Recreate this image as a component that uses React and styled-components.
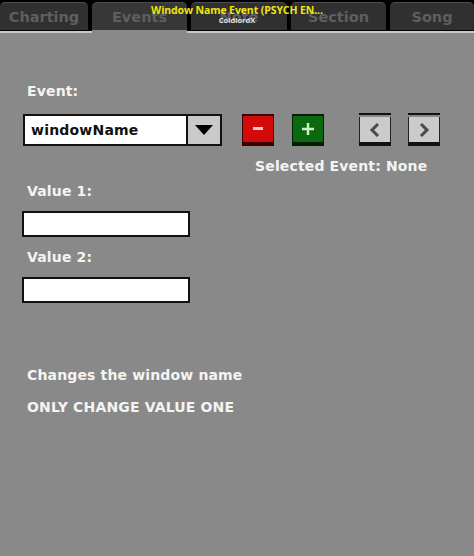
import React from "react";
import styled, { createGlobalStyle } from "styled-components";

const GlobalStyle = createGlobalStyle`
  html, body {
    margin: 0;
    padding: 0;
    background: #898989;
  }
  body {
    font-family: "DejaVu Sans", "Liberation Sans", sans-serif;
  }
`;

const Page = styled("div")`
  width: 474px;
  height: 556px;
  background: #898989;
  overflow: hidden;
  position: relative;
`;

const TabBar = styled("div")`
  display: flex;
  gap: 4px;
  height: 28px;
  padding-top: 2px;
  padding-bottom: 1px;
  background: #000;
  border-bottom: 2px solid #c9c9c9;
`;

const Tab = styled("div")`
  width: ${p => p.w}px;
  flex: none;
  height: ${p => (p.active ? 31 : 28)}px;
  margin-bottom: ${p => (p.active ? -3 : 0)}px;
  box-sizing: border-box;
  border-radius: 5px 5px 0 0;
  border-top: 1px solid #4c4c4c;
  background: ${p => (p.active ? "linear-gradient(#373737 27px, #898989 27px)" : "#303030")};
  color: #5f5f5f;
  font-weight: bold;
  font-size: 14.5px;
  line-height: 29px;
  text-align: center;
  position: relative;
  z-index: ${p => (p.active ? 1 : 0)};
`;

const TitleOverlay = styled("div")`
  position: absolute;
  top: 4px;
  left: 0;
  right: 0;
  text-align: center;
  z-index: 2;
  font-family: "Open Sans", "DejaVu Sans", sans-serif;
`;

const TitleText = styled("div")`
  color: #f2e40c;
  font-size: 10.5px;
  font-weight: bold;
  line-height: 12px;
  letter-spacing: -0.1px;
`;

const Author = styled("div")`
  color: #e0e0e0;
  font-size: 7.5px;
  font-weight: bold;
  line-height: 9px;
`;

const Content = styled("div")`
  padding: 0 0 0 22px;
  display: flex;
  flex-direction: column;
  align-items: flex-start;
`;

const Label = styled("div")`
  color: #f4f4f4;
  font-weight: bold;
  font-size: 14px;
  line-height: 16px;
  letter-spacing: 0.15px;
  margin-top: ${p => p.mt || 0}px;
  margin-left: ${p => (p.ml == null ? 5 : p.ml)}px;
`;

const EventRow = styled("div")`
  display: flex;
  align-items: flex-start;
  margin-top: 15px;
  margin-left: 1px;
`;

const Dropdown = styled("div")`
  display: flex;
  width: 199px;
  height: 32px;
  box-sizing: border-box;
  border: 2px solid #111;
  background: #fff;
`;

const DropdownText = styled("div")`
  flex: 1;
  color: #111;
  font-weight: bold;
  font-size: 14px;
  line-height: 29px;
  padding-left: 6px;
  letter-spacing: 0.2px;
`;

const DropdownArrow = styled("div")`
  width: 32px;
  border-left: 2px solid #111;
  background: #c9c9c9;
  display: flex;
  align-items: center;
  justify-content: center;
`;

const ColorButton = styled("div")`
  width: 32px;
  height: 32px;
  box-sizing: border-box;
  margin-left: ${p => p.ml}px;
  background: ${p => p.bg};
  border-top: 2px solid ${p => p.edge};
  border-bottom: 4px solid ${p => p.edge};
  border-left: 1px solid ${p => p.edge};
  border-right: 1px solid ${p => p.edge};
  display: flex;
  align-items: center;
  justify-content: center;
`;

const NavButton = styled("div")`
  width: 32px;
  height: 33px;
  margin-left: ${p => p.ml}px;
  margin-top: -1px;
  box-sizing: border-box;
  border-top: 2px solid #111;
  border-bottom: 4px solid #111;
  display: flex;
  flex-direction: column;
`;

const NavFace = styled("div")`
  flex: 1;
  margin-top: 2px;
  background: #cbcbcb;
  border-left: 1px solid #222;
  border-right: 1px solid #222;
  display: flex;
  align-items: center;
  justify-content: center;
`;

const Field = styled("div")`
  width: 168px;
  height: 26px;
  box-sizing: border-box;
  border: 2px solid #111;
  background: #fff;
  margin-top: ${p => p.mt}px;
`;

const Arrow = ({ dir }) => (
  <svg width="12" height="16" viewBox="0 0 12 16">
    <path
      d={dir === "left" ? "M9 2 L3 8 L9 14" : "M3 2 L9 8 L3 14"}
      fill="none"
      stroke="#4a4a4a"
      strokeWidth="3"
    />
  </svg>
);

const tabs = [
  { name: "Charting", w: 88 },
  { name: "Events", w: 95, active: true },
  { name: "Note", w: 96 },
  { name: "Section", w: 95 },
  { name: "Song", w: 84 },
];

export default function App() {
  return (
    <Page>
      <GlobalStyle />
      <TabBar>
        {tabs.map(t => (
          <Tab key={t.name} w={t.w} active={t.active}>
            {t.name}
          </Tab>
        ))}
      </TabBar>
      <TitleOverlay>
        <TitleText>Window Name Event (PSYCH EN...</TitleText>
        <Author>ColdlordX</Author>
      </TitleOverlay>
      <Content>
        <Label mt={50}>Event:</Label>
        <EventRow>
          <Dropdown>
            <DropdownText>windowName</DropdownText>
            <DropdownArrow>
              <svg width="18" height="10" viewBox="0 0 18 10">
                <path d="M0 0 H18 L9 10 Z" fill="#000" />
              </svg>
            </DropdownArrow>
          </Dropdown>
          <ColorButton ml={20} bg="#d20a0a" edge="#3c0000">
            <svg width="10" height="4" viewBox="0 0 10 4">
              <rect x="0" y="0" width="10" height="3" fill="#f6c8c8" />
            </svg>
          </ColorButton>
          <ColorButton ml={18} bg="#0b6a10" edge="#021d02">
            <svg width="12" height="12" viewBox="0 0 12 12">
              <path d="M6 0 V12 M0 6 H12" stroke="#c8f0c0" strokeWidth="2.5" />
            </svg>
          </ColorButton>
          <NavButton ml={35}>
            <NavFace>
              <Arrow dir="left" />
            </NavFace>
          </NavButton>
          <NavButton ml={17}>
            <NavFace>
              <Arrow dir="right" />
            </NavFace>
          </NavButton>
        </EventRow>
        <Label mt={12} ml={233}>Selected Event: None</Label>
        <Label mt={9}>Value 1:</Label>
        <Field mt={12} />
        <Label mt={12}>Value 2:</Label>
        <Field mt={12} />
        <Label mt={64}>Changes the window name</Label>
        <Label mt={16}>ONLY CHANGE VALUE ONE</Label>
      </Content>
    </Page>
  );
}
